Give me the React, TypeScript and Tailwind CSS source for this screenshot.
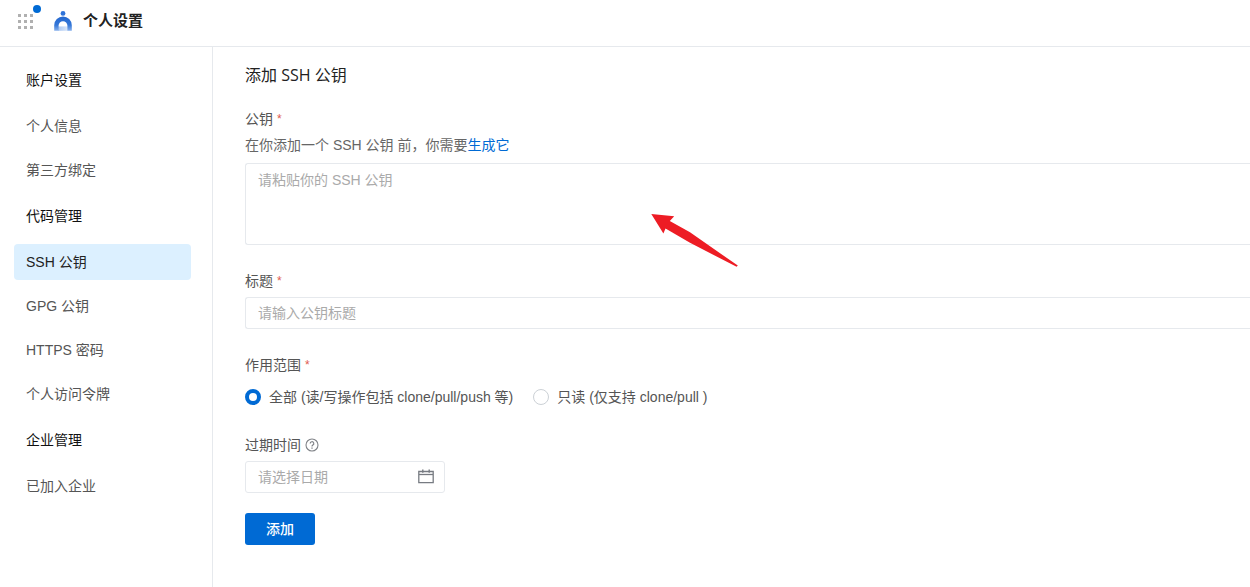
import { useState } from 'react'

const menu = [
  { title: '账户设置', items: ['个人信息', '第三方绑定'] },
  { title: '代码管理', items: ['SSH 公钥', 'GPG 公钥', 'HTTPS 密码', '个人访问令牌'] },
  { title: '企业管理', items: ['已加入企业'] },
]

const scopes = [
  { value: 'all', label: '全部 (读/写操作包括 clone/pull/push 等)' },
  { value: 'read', label: '只读 (仅支持 clone/pull )' },
]

const fieldClass =
  'block border border-[#e6e9ed] bg-white px-3 text-[14px] text-[#333] placeholder:text-[#aaa] placeholder:opacity-100 outline-none focus:border-[#006ad4]'

function AppsIcon() {
  return (
    <svg width="15" height="15" viewBox="0 0 15 15" fill="#b0b0b0" aria-hidden="true">
      {[0, 6, 12].map((y) => [0, 6, 12].map((x) => <rect key={`${x}-${y}`} x={x} y={y} width="3" height="3" />))}
    </svg>
  )
}

function Logo() {
  return (
    <svg width="18" height="20" viewBox="0 0 18 20" aria-hidden="true">
      <defs>
        <linearGradient id="arch" x1="0" y1="0" x2="0" y2="1">
          <stop offset="0" stopColor="#2468cf" />
          <stop offset="0.6" stopColor="#3477d8" />
          <stop offset="1" stopColor="#8ab2ec" />
        </linearGradient>
        <linearGradient id="base" x1="0" y1="0" x2="1" y2="0">
          <stop offset="0" stopColor="#a9c6f1" />
          <stop offset="1" stopColor="#dbe8fa" />
        </linearGradient>
      </defs>
      <circle cx="9" cy="2.4" r="2.4" fill="#2f73d9" />
      <path d="M4 15.4h10v4.4H4z" fill="url(#base)" />
      <path
        d="M0.2 19.8V14.2a8.8 8.8 0 0 1 17.6 0v5.6h-4.4V14.6a4.4 4.4 0 0 0-8.8 0v5.2z"
        fill="url(#arch)"
      />
    </svg>
  )
}

function HelpIcon() {
  return (
    <svg width="14" height="14" viewBox="0 0 14 14" fill="none" stroke="#808388" aria-hidden="true">
      <circle cx="7" cy="7" r="6" strokeWidth="1.1" />
      <path d="M5.2 5.6a1.8 1.8 0 1 1 2.7 1.5c-.6.4-.9.7-.9 1.3" strokeWidth="1.2" />
      <path d="M7 9.5v1.2" strokeWidth="1.3" />
    </svg>
  )
}

function CalendarIcon() {
  return (
    <svg width="16" height="16" viewBox="0 0 16 16" fill="none" stroke="#777b82" aria-hidden="true">
      <path d="M0.8 2.5h14.4v11.2H0.8z" strokeWidth="1.3" />
      <path d="M1 5.5h14" strokeWidth="1.3" />
      <path d="M4.8 0.4v3.4M11.2 0.4v3.4" strokeWidth="1.4" />
    </svg>
  )
}

function Required() {
  return <span className="text-[12px] text-[#e05a4f]">*</span>
}

function Header() {
  return (
    <header className="flex h-[47px] items-center border-b border-[#e6e9ed] pl-[18px] pb-[4px]">
      <button type="button" aria-label="应用" className="relative">
        <AppsIcon />
        <span className="absolute -top-[9px] left-[15px] size-2 rounded-full bg-[#006ad4]" />
      </button>
      <a href="#" className="ml-[21px] flex items-center gap-[11px] text-[#222]">
        <Logo />
        <span className="text-[15px] leading-5 font-bold">个人设置</span>
      </a>
    </header>
  )
}

function Sidebar() {
  return (
    <nav className="w-[213px] shrink-0 border-r border-[#e6e9ed] pt-[13px] pr-[21px] pl-[14px]">
      <div className="flex flex-col gap-2">
        {menu.map((group) => (
          <section key={group.title} className="flex flex-col gap-2">
            <h2 className="px-3 leading-10 text-[#111]">{group.title}</h2>
            {group.items.map((item) => (
              <a
                key={item}
                href="#"
                className={
                  item === 'SSH 公钥'
                    ? 'rounded-[4px] bg-[#dcf0ff] px-3 leading-9 text-[#222]'
                    : 'rounded-[4px] px-3 leading-9 text-[#555] hover:bg-gray-50'
                }
              >
                {item}
              </a>
            ))}
          </section>
        ))}
      </div>
    </nav>
  )
}

function KeyForm() {
  const [scope, setScope] = useState('all')

  return (
    <form className="text-[#555]" onSubmit={(e) => e.preventDefault()}>
      <div className="mt-[22px]">
        <label htmlFor="key" className="flex gap-1 leading-5">
          公钥 <Required />
        </label>
        <p className="mt-[6px] leading-5 text-[#666]">
          在你添加一个 SSH 公钥 前，你需要
          <a href="#" className="text-[#006ad4]">生成它</a>
        </p>
        <div className="relative mt-2">
          <textarea
            id="key"
            placeholder="请粘贴你的 SSH 公钥"
            className={`${fieldClass} h-[82px] w-full resize-none rounded-l-[3px] border-r-0 py-[6px] leading-5`}
          />
          <svg
            className="pointer-events-none absolute top-[50px] left-[405px]"
            width="90"
            height="56"
            viewBox="0 0 90 56"
            fill="#ed1c24"
            aria-hidden="true"
          >
            <path d="M1.3 1L24.2 3.3L19.8 8L40 19.3L87.8 52.6L86.6 53.8L40 29.8L15.5 15.4L13.4 20.4z" />
          </svg>
        </div>
      </div>

      <div className="mt-[26px]">
        <label htmlFor="title" className="flex gap-1 leading-5">
          标题 <Required />
        </label>
        <input
          id="title"
          type="text"
          placeholder="请输入公钥标题"
          className={`${fieldClass} mt-[6px] h-8 w-full rounded-l-[3px] border-r-0`}
        />
      </div>

      <fieldset className="mt-[26px]">
        <legend className="flex gap-1 leading-5">
          作用范围 <Required />
        </legend>
        <div className="mt-[6px] flex h-8 items-center gap-5">
          {scopes.map((s) => (
            <label key={s.value} className="flex items-center gap-2 leading-5">
              <input
                type="radio"
                name="scope"
                value={s.value}
                checked={scope === s.value}
                onChange={() => setScope(s.value)}
                className="size-4 appearance-none rounded-full border border-[#ccd1d6] bg-white checked:border-4 checked:border-[#006ad4]"
              />
              {s.label}
            </label>
          ))}
        </div>
      </fieldset>

      <div className="mt-[22px]">
        <div className="flex items-center gap-1 leading-5">
          <label htmlFor="expire">过期时间</label>
          <HelpIcon />
        </div>
        <div className="relative mt-[6px] w-[200px]">
          <input
            id="expire"
            type="text"
            placeholder="请选择日期"
            className={`${fieldClass} h-8 w-full rounded-[3px] pr-9`}
          />
          <button type="button" aria-label="选择日期" className="absolute top-2 right-[11px]">
            <CalendarIcon />
          </button>
        </div>
      </div>

      <button
        type="submit"
        className="mt-5 block h-8 w-[70px] rounded-[3px] bg-[#006ad4] font-medium text-white hover:bg-[#005bb8]"
      >
        添加
      </button>
    </form>
  )
}

export default function App() {
  return (
    <div className="flex min-h-screen flex-col bg-white font-['Liberation_Sans','Noto_Sans_CJK_SC',sans-serif] text-[14px]">
      <Header />
      <div className="flex flex-1">
        <Sidebar />
        <main className="min-w-0 flex-1 pt-4 pb-8 pl-8">
          <h1 className="font-['Open_Sans','Noto_Sans_CJK_SC',sans-serif] text-[16px] leading-6 text-[#222]">添加 SSH 公钥</h1>
          <KeyForm />
        </main>
      </div>
    </div>
  )
}
